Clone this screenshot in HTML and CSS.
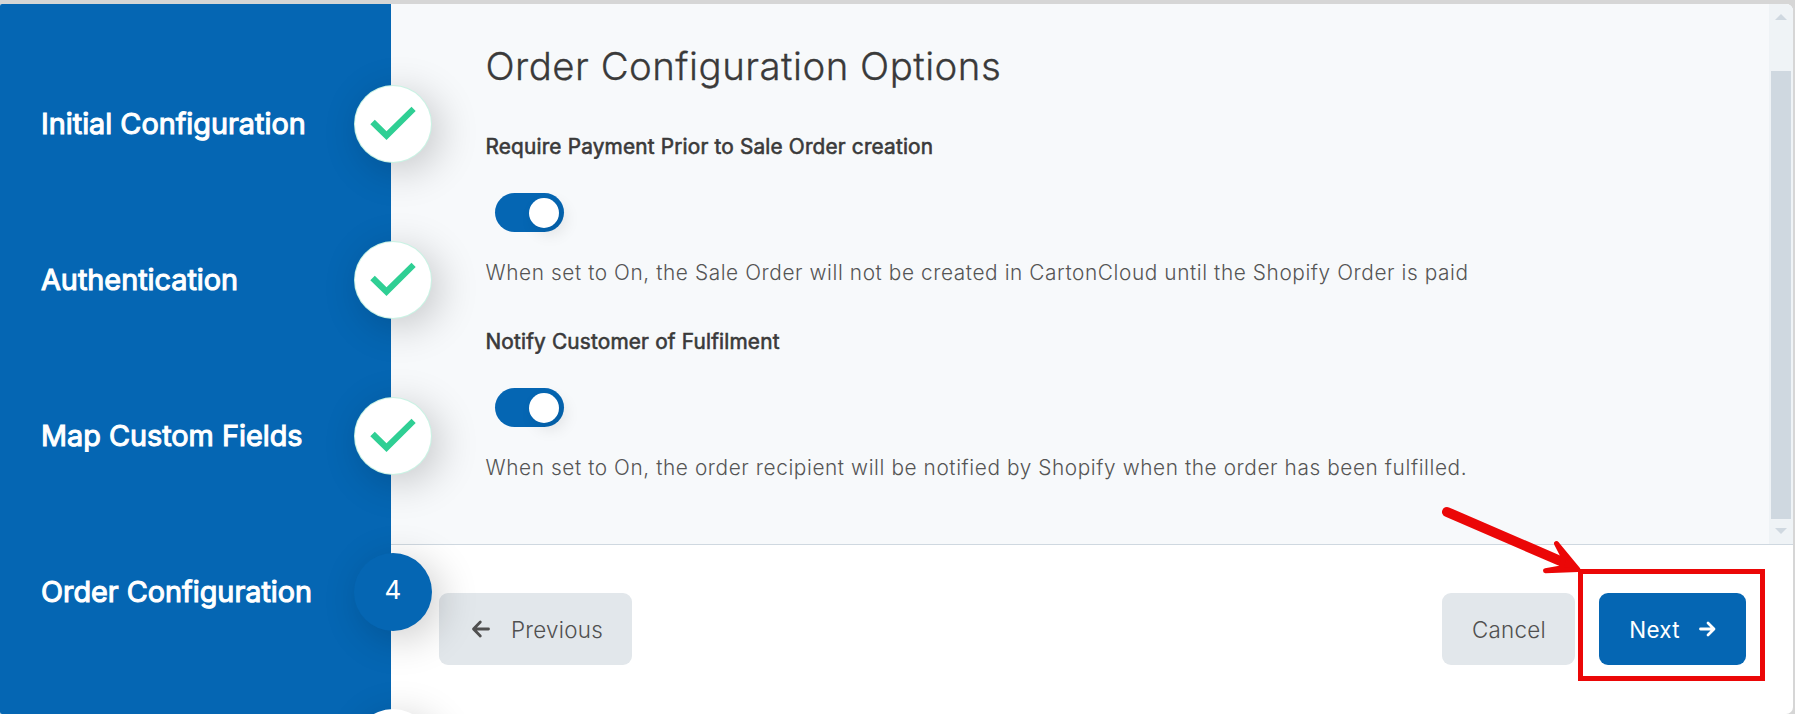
FILE: index.html
```
<!DOCTYPE html>
<html lang="en">
<head>
    <meta charset="UTF-8"/>
    <meta name="viewport" content="width=device-width, initial-scale=1.0"/>
    <title>Order Configuration</title>
    <link rel="stylesheet" href="styles.css">
</head>
<body>
    <div class="modal">
        <nav class="steps">
            <div class="step">
                <span class="step-name">Initial Configuration</span>
                <span class="step-circle done">
                    <svg width="78" height="78" viewBox="0 0 78 78"><path d="M16.3 39.3L20.8 34.7L32.5 46.2L57.5 21.7L61.7 26L32.5 55Z"/></svg>
                </span>
            </div>
            <div class="step">
                <span class="step-name">Authentication</span>
                <span class="step-circle done">
                    <svg width="78" height="78" viewBox="0 0 78 78"><path d="M16.3 39.3L20.8 34.7L32.5 46.2L57.5 21.7L61.7 26L32.5 55Z"/></svg>
                </span>
            </div>
            <div class="step">
                <span class="step-name">Map Custom Fields</span>
                <span class="step-circle done">
                    <svg width="78" height="78" viewBox="0 0 78 78"><path d="M16.3 39.3L20.8 34.7L32.5 46.2L57.5 21.7L61.7 26L32.5 55Z"/></svg>
                </span>
            </div>
            <div class="step">
                <span class="step-name">Order Configuration</span>
                <span class="step-circle current">4</span>
            </div>
            <div class="step">
                <span class="step-name"></span>
                <span class="step-circle"></span>
            </div>
        </nav>

        <main class="content">
            <div class="pane">
                <div class="options">
                    <h1>Order Configuration Options</h1>

                    <section class="option">
                        <h2>Require Payment Prior to Sale Order creation</h2>
                        <div class="toggle"><span class="knob"></span></div>
                        <p>When set to On, the Sale Order will not be created in CartonCloud until the Shopify Order is paid</p>
                    </section>

                    <section class="option">
                        <h2>Notify Customer of Fulfilment</h2>
                        <div class="toggle"><span class="knob"></span></div>
                        <p>When set to On, the order recipient will be notified by Shopify when the order has been fulfilled.</p>
                    </section>
                </div>
                <div class="scrollbar">
                    <svg width="12" height="6" viewBox="0 0 12 6"><path d="M6 0L12 6H0Z"/></svg>
                    <div class="thumb"></div>
                    <svg width="12" height="6" viewBox="0 0 12 6"><path d="M0 0H12L6 6Z"/></svg>
                </div>
            </div>

            <div class="footer">
                <button class="btn previous">
                    <svg width="20" height="20" viewBox="0 0 20 20"><path d="M17.5 10H3M9.3 3L2.5 10L9.3 17"/></svg>
                    Previous
                </button>
                <button class="btn cancel">Cancel</button>
                <button class="btn next">
                    Next
                    <svg width="17" height="18" viewBox="0 0 17 18"><path d="M1.5 9H14M9 3L15 9L9 15"/></svg>
                </button>
            </div>
        </main>
    </div>

    <!-- red highlight around the Next button -->
    <svg class="highlight" width="330" height="190" viewBox="1440 500 330 190">
        <rect x="1580.5" y="571.5" width="182" height="107"/>
        <path class="shaft" d="M1447 512L1565 563"/>
        <path class="head" d="M1556.5 543.5L1578 569.5L1545.5 570.7L1561 568L1564 558Z"/>
    </svg>
</body>
</html>
```
FILE: styles.css
```
* {
    box-sizing: border-box;
}

body {
    margin: 0;
    height: 714px;
    padding: 4px 2px 0 0;
    overflow: hidden;
    background: #d6d6d6;
    font-family: Inter, "Liberation Sans", sans-serif;
}

h1, h2, p {
    margin: 0;
}

.modal {
    display: flex;
    height: 710px;
    background: #fff;
    border-radius: 2px 7px 7px 2px;
    overflow: hidden;
}

/* Steps */
.steps {
    position: relative;
    z-index: 1;
    width: 391px;
    flex-shrink: 0;
    padding-top: 81px;
    background: #0566b3;
}

.step {
    display: flex;
    align-items: center;
    justify-content: space-between;
    height: 78px;
    margin: 0 -41px 78px 0;
    padding-left: 41px;
}

.step-name {
    padding-bottom: 1px;
    color: #fff;
    font-size: 28.8px;
    -webkit-text-stroke: 1.1px #fff;
}

.step-circle {
    display: flex;
    align-items: center;
    justify-content: center;
    width: 78px;
    height: 78px;
    border-radius: 50%;
    background: #fff;
    box-shadow: 8px 8px 40px rgba(0, 0, 0, 0.2);
}

.done {
    border: 1px solid rgba(43, 207, 147, 0.25);
}

.done svg {
    flex-shrink: 0;
    fill: #2fcf94;
}

.current {
    padding-bottom: 6px;
    background: #0566b3;
    color: #fff;
    font-size: 26px;
}

/* Content */
.content {
    flex: 1;
}

.pane {
    display: flex;
    height: 541px;
    background: #f7f9fb;
    border-bottom: 1px solid #cfd8e0;
}

.options {
    flex: 1;
    padding: 38px 0 0 94.5px;
}

h1 {
    color: #3a3a3a;
    font-size: 38.4px;
    font-weight: 300;
    line-height: 48px;
    letter-spacing: 0.48px;
    -webkit-text-stroke: 0.3px #3a3a3a;
}

.option {
    margin-top: 44px;
}

.option + .option {
    margin-top: 43px;
}

h2 {
    color: #3a3a3a;
    font-size: 20.8px;
    font-weight: 400;
    line-height: 26px;
    letter-spacing: 0.18px;
    -webkit-text-stroke: 0.6px #3a3a3a;
}

.option p {
    color: #555;
    font-size: 20.8px;
    font-weight: 300;
    line-height: 26px;
    letter-spacing: 0.59px;
}

.toggle {
    display: flex;
    justify-content: flex-end;
    width: 69px;
    height: 39px;
    margin: 33px 0 28px 9.5px;
    padding: 5px;
    border-radius: 20px;
    background: #0566b3;
}

.knob {
    width: 30px;
    height: 30px;
    border-radius: 50%;
    background: #fff;
    box-shadow: 6px 6px 16px rgba(0, 0, 0, 0.1);
}

.scrollbar {
    display: flex;
    flex-direction: column;
    align-items: center;
    justify-content: space-between;
    width: 24px;
    padding: 10px 2px 10px 2px;
    background: #eff3f6;
}

.scrollbar svg {
    fill: #cfd8e0;
}

.thumb {
    width: 20px;
    height: 448px;
    margin-top: 42px;
    margin-bottom: auto;
    background: #cfd8e0;
}

.scrollbar svg:first-child {
    margin-bottom: 9px;
}

/* Footer */
.footer {
    display: flex;
    padding: 48px 47px 0 48px;
}

.btn {
    display: flex;
    align-items: center;
    justify-content: center;
    height: 72px;
    padding: 0;
    border: none;
    border-radius: 9px;
    background: #e2e7eb;
    color: #505050;
    font-family: inherit;
    font-size: 22.4px;
    font-weight: 300;
    letter-spacing: 0.25px;
}

.btn svg {
    fill: none;
    stroke: currentColor;
    stroke-width: 2.8;
    stroke-linecap: round;
    stroke-linejoin: round;
}

.previous {
    width: 193px;
    gap: 20px;
    padding-left: 3px;
}

.cancel {
    width: 133px;
    margin-left: auto;
    padding-left: 1px;
}

.next {
    width: 147px;
    margin-left: 24px;
    gap: 19px;
    background: #0566b3;
    color: #fff;
    font-weight: 400;
}

.highlight {
    position: absolute;
    left: 1440px;
    top: 500px;
    z-index: 2;
    fill: none;
    stroke: #eb0707;
    stroke-width: 5;
}

.shaft {
    stroke-width: 10;
    stroke-linecap: round;
}

.head {
    fill: #eb0707;
    stroke-linejoin: round;
}
```
